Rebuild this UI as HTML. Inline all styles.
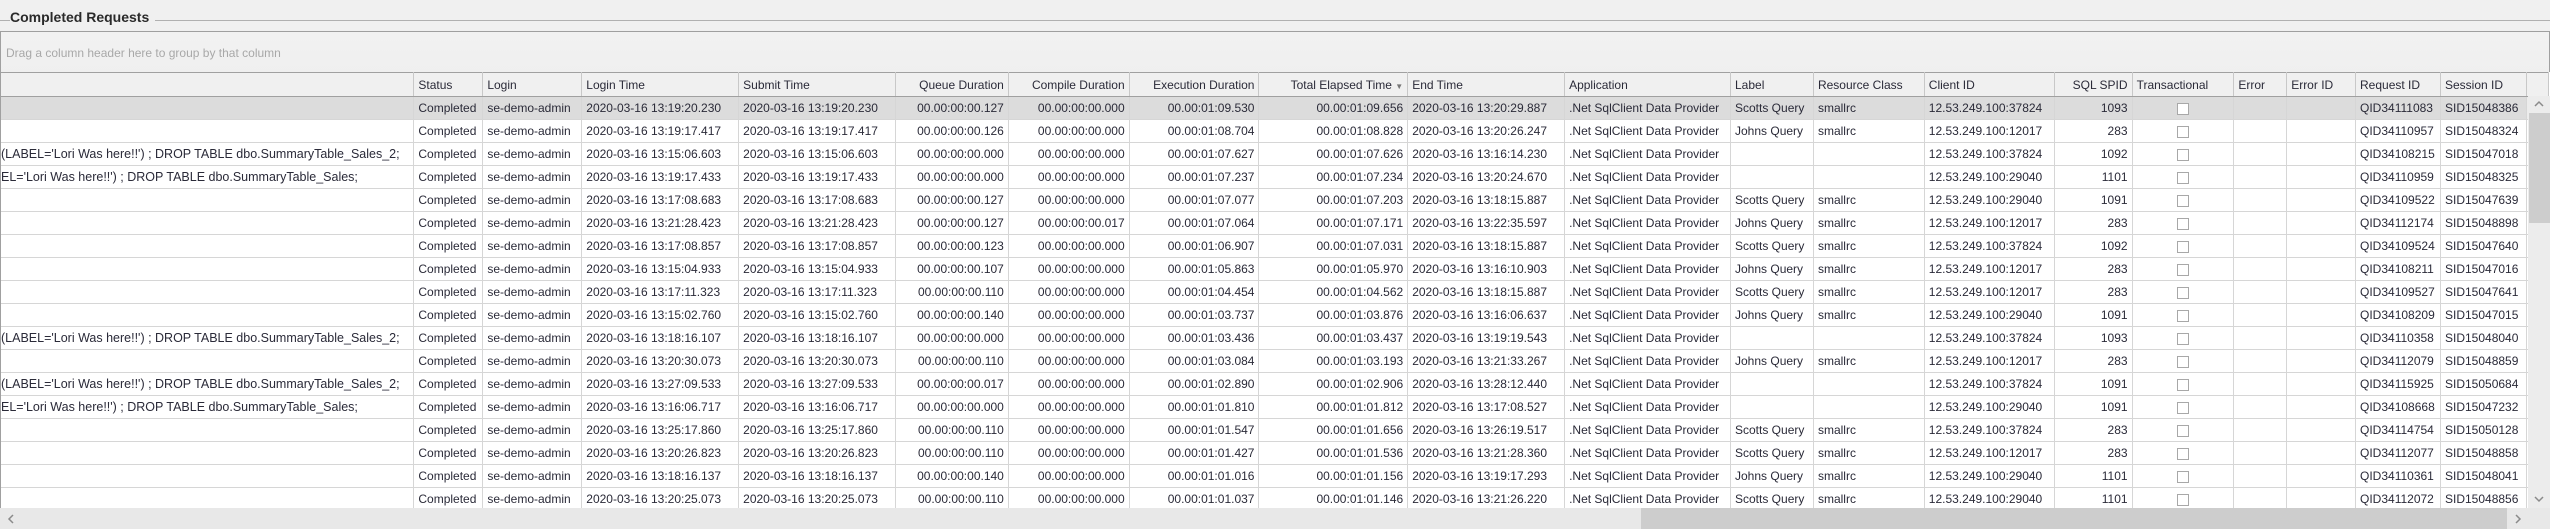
<!DOCTYPE html>
<html><head><meta charset="utf-8"><style>
*{box-sizing:border-box;margin:0;padding:0}
body{width:2550px;height:529px;overflow:hidden;background:#f0f0f0;font-family:"Liberation Sans",sans-serif;color:#2a2a38;position:relative}
.title{position:absolute;left:10px;top:9px;font-size:14px;font-weight:bold;color:#2a2a2a;background:#f0f0f0;padding:0 6px 0 0;z-index:2}
.tline{position:absolute;left:0;right:0;top:20px;border-top:1px solid #b0b0b0}
.grp{position:absolute;left:0;top:31px;width:2550px;height:42px;border:1px solid #a0a0a0;border-bottom:none;background:linear-gradient(#f2f2f2,#efefef)}
.grp span{position:absolute;left:5px;top:14px;font-size:12px;color:#a8a8a8}
.grid{position:absolute;left:0;top:72px;width:2550px;height:457px;border-left:1px solid #a0a0a0;background:#fff;overflow:hidden}
table{border-collapse:collapse;table-layout:fixed;position:absolute;left:-1px;top:0}
td,th{height:23px;white-space:nowrap;overflow:hidden;font-size:12px;padding:0 4px;border-right:1px solid #d6d6d6;border-bottom:1px solid #d6d6d6;text-align:left;font-weight:normal}
th{background:#f0f0f0;border-top:1px solid #a0a0a0;border-bottom:1px solid #a0a0a0;border-right:1px solid #c8c8c8;height:24px}
tr.sel td{background:#dcdcdc}
td.r,th.r{text-align:right}
td.c{text-align:center}
td.q{font-size:12.5px;padding:0 0 0 1px}
.cb{display:inline-block;width:12px;height:12px;border:1px solid #a8a8a8;background:#fff;vertical-align:middle}
.vs{position:absolute;left:2528px;top:96px;width:22px;height:412px;background:#ececec}
.vt{position:absolute;left:2529px;top:113px;width:21px;height:110px;background:#cdcdcd}
.hs{position:absolute;left:0;top:508px;width:2550px;height:21px;background:#e8e8e8}
.ht{position:absolute;left:1641px;top:508px;width:866px;height:21px;background:#cdcdcd}
svg.ar{position:absolute}
</style></head><body>
<div class="tline"></div>
<div class="title">Completed Requests</div>
<div class="grp"><span>Drag a column header here to group by that column</span></div>
<div class="grid">
<table>
<colgroup>
<col style="width:414px"><col style="width:69px"><col style="width:99px"><col style="width:157px"><col style="width:157px"><col style="width:113px"><col style="width:121px"><col style="width:130px"><col style="width:149px"><col style="width:157px"><col style="width:166px"><col style="width:83px"><col style="width:111px"><col style="width:130px"><col style="width:78px"><col style="width:102px"><col style="width:53px"><col style="width:69px"><col style="width:85px"><col style="width:86px"><col style="width:22px">
</colgroup>
<tr><th></th><th>Status</th><th>Login</th><th>Login Time</th><th>Submit Time</th><th class="r">Queue Duration</th><th class="r">Compile Duration</th><th class="r">Execution Duration</th><th class="r">Total Elapsed Time <span style="font-size:8px;color:#777">&#9660;</span></th><th>End Time</th><th>Application</th><th>Label</th><th>Resource Class</th><th>Client ID</th><th class="r">SQL SPID</th><th>Transactional</th><th>Error</th><th>Error ID</th><th>Request ID</th><th>Session ID</th><th></th></tr>
<tr class="sel"><td></td><td>Completed</td><td>se-demo-admin</td><td>2020-03-16 13:19:20.230</td><td>2020-03-16 13:19:20.230</td><td class="r">00.00:00:00.127</td><td class="r">00.00:00:00.000</td><td class="r">00.00:01:09.530</td><td class="r">00.00:01:09.656</td><td>2020-03-16 13:20:29.887</td><td>.Net SqlClient Data Provider</td><td>Scotts Query</td><td>smallrc</td><td>12.53.249.100:37824</td><td class="r">1093</td><td class="c"><span class="cb"></span></td><td></td><td></td><td>QID34111083</td><td>SID15048386</td><td style="background:#ececec"></td></tr>
<tr><td></td><td>Completed</td><td>se-demo-admin</td><td>2020-03-16 13:19:17.417</td><td>2020-03-16 13:19:17.417</td><td class="r">00.00:00:00.126</td><td class="r">00.00:00:00.000</td><td class="r">00.00:01:08.704</td><td class="r">00.00:01:08.828</td><td>2020-03-16 13:20:26.247</td><td>.Net SqlClient Data Provider</td><td>Johns Query</td><td>smallrc</td><td>12.53.249.100:12017</td><td class="r">283</td><td class="c"><span class="cb"></span></td><td></td><td></td><td>QID34110957</td><td>SID15048324</td><td></td></tr>
<tr><td class="q">(LABEL='Lori Was here!!') ; DROP TABLE dbo.SummaryTable_Sales_2;</td><td>Completed</td><td>se-demo-admin</td><td>2020-03-16 13:15:06.603</td><td>2020-03-16 13:15:06.603</td><td class="r">00.00:00:00.000</td><td class="r">00.00:00:00.000</td><td class="r">00.00:01:07.627</td><td class="r">00.00:01:07.626</td><td>2020-03-16 13:16:14.230</td><td>.Net SqlClient Data Provider</td><td></td><td></td><td>12.53.249.100:37824</td><td class="r">1092</td><td class="c"><span class="cb"></span></td><td></td><td></td><td>QID34108215</td><td>SID15047018</td><td></td></tr>
<tr><td class="q">EL='Lori Was here!!') ; DROP TABLE dbo.SummaryTable_Sales;</td><td>Completed</td><td>se-demo-admin</td><td>2020-03-16 13:19:17.433</td><td>2020-03-16 13:19:17.433</td><td class="r">00.00:00:00.000</td><td class="r">00.00:00:00.000</td><td class="r">00.00:01:07.237</td><td class="r">00.00:01:07.234</td><td>2020-03-16 13:20:24.670</td><td>.Net SqlClient Data Provider</td><td></td><td></td><td>12.53.249.100:29040</td><td class="r">1101</td><td class="c"><span class="cb"></span></td><td></td><td></td><td>QID34110959</td><td>SID15048325</td><td></td></tr>
<tr><td></td><td>Completed</td><td>se-demo-admin</td><td>2020-03-16 13:17:08.683</td><td>2020-03-16 13:17:08.683</td><td class="r">00.00:00:00.127</td><td class="r">00.00:00:00.000</td><td class="r">00.00:01:07.077</td><td class="r">00.00:01:07.203</td><td>2020-03-16 13:18:15.887</td><td>.Net SqlClient Data Provider</td><td>Scotts Query</td><td>smallrc</td><td>12.53.249.100:29040</td><td class="r">1091</td><td class="c"><span class="cb"></span></td><td></td><td></td><td>QID34109522</td><td>SID15047639</td><td></td></tr>
<tr><td></td><td>Completed</td><td>se-demo-admin</td><td>2020-03-16 13:21:28.423</td><td>2020-03-16 13:21:28.423</td><td class="r">00.00:00:00.127</td><td class="r">00.00:00:00.017</td><td class="r">00.00:01:07.064</td><td class="r">00.00:01:07.171</td><td>2020-03-16 13:22:35.597</td><td>.Net SqlClient Data Provider</td><td>Johns Query</td><td>smallrc</td><td>12.53.249.100:12017</td><td class="r">283</td><td class="c"><span class="cb"></span></td><td></td><td></td><td>QID34112174</td><td>SID15048898</td><td></td></tr>
<tr><td></td><td>Completed</td><td>se-demo-admin</td><td>2020-03-16 13:17:08.857</td><td>2020-03-16 13:17:08.857</td><td class="r">00.00:00:00.123</td><td class="r">00.00:00:00.000</td><td class="r">00.00:01:06.907</td><td class="r">00.00:01:07.031</td><td>2020-03-16 13:18:15.887</td><td>.Net SqlClient Data Provider</td><td>Scotts Query</td><td>smallrc</td><td>12.53.249.100:37824</td><td class="r">1092</td><td class="c"><span class="cb"></span></td><td></td><td></td><td>QID34109524</td><td>SID15047640</td><td></td></tr>
<tr><td></td><td>Completed</td><td>se-demo-admin</td><td>2020-03-16 13:15:04.933</td><td>2020-03-16 13:15:04.933</td><td class="r">00.00:00:00.107</td><td class="r">00.00:00:00.000</td><td class="r">00.00:01:05.863</td><td class="r">00.00:01:05.970</td><td>2020-03-16 13:16:10.903</td><td>.Net SqlClient Data Provider</td><td>Johns Query</td><td>smallrc</td><td>12.53.249.100:12017</td><td class="r">283</td><td class="c"><span class="cb"></span></td><td></td><td></td><td>QID34108211</td><td>SID15047016</td><td></td></tr>
<tr><td></td><td>Completed</td><td>se-demo-admin</td><td>2020-03-16 13:17:11.323</td><td>2020-03-16 13:17:11.323</td><td class="r">00.00:00:00.110</td><td class="r">00.00:00:00.000</td><td class="r">00.00:01:04.454</td><td class="r">00.00:01:04.562</td><td>2020-03-16 13:18:15.887</td><td>.Net SqlClient Data Provider</td><td>Scotts Query</td><td>smallrc</td><td>12.53.249.100:12017</td><td class="r">283</td><td class="c"><span class="cb"></span></td><td></td><td></td><td>QID34109527</td><td>SID15047641</td><td></td></tr>
<tr><td></td><td>Completed</td><td>se-demo-admin</td><td>2020-03-16 13:15:02.760</td><td>2020-03-16 13:15:02.760</td><td class="r">00.00:00:00.140</td><td class="r">00.00:00:00.000</td><td class="r">00.00:01:03.737</td><td class="r">00.00:01:03.876</td><td>2020-03-16 13:16:06.637</td><td>.Net SqlClient Data Provider</td><td>Johns Query</td><td>smallrc</td><td>12.53.249.100:29040</td><td class="r">1091</td><td class="c"><span class="cb"></span></td><td></td><td></td><td>QID34108209</td><td>SID15047015</td><td></td></tr>
<tr><td class="q">(LABEL='Lori Was here!!') ; DROP TABLE dbo.SummaryTable_Sales_2;</td><td>Completed</td><td>se-demo-admin</td><td>2020-03-16 13:18:16.107</td><td>2020-03-16 13:18:16.107</td><td class="r">00.00:00:00.000</td><td class="r">00.00:00:00.000</td><td class="r">00.00:01:03.436</td><td class="r">00.00:01:03.437</td><td>2020-03-16 13:19:19.543</td><td>.Net SqlClient Data Provider</td><td></td><td></td><td>12.53.249.100:37824</td><td class="r">1093</td><td class="c"><span class="cb"></span></td><td></td><td></td><td>QID34110358</td><td>SID15048040</td><td></td></tr>
<tr><td></td><td>Completed</td><td>se-demo-admin</td><td>2020-03-16 13:20:30.073</td><td>2020-03-16 13:20:30.073</td><td class="r">00.00:00:00.110</td><td class="r">00.00:00:00.000</td><td class="r">00.00:01:03.084</td><td class="r">00.00:01:03.193</td><td>2020-03-16 13:21:33.267</td><td>.Net SqlClient Data Provider</td><td>Johns Query</td><td>smallrc</td><td>12.53.249.100:12017</td><td class="r">283</td><td class="c"><span class="cb"></span></td><td></td><td></td><td>QID34112079</td><td>SID15048859</td><td></td></tr>
<tr><td class="q">(LABEL='Lori Was here!!') ; DROP TABLE dbo.SummaryTable_Sales_2;</td><td>Completed</td><td>se-demo-admin</td><td>2020-03-16 13:27:09.533</td><td>2020-03-16 13:27:09.533</td><td class="r">00.00:00:00.017</td><td class="r">00.00:00:00.000</td><td class="r">00.00:01:02.890</td><td class="r">00.00:01:02.906</td><td>2020-03-16 13:28:12.440</td><td>.Net SqlClient Data Provider</td><td></td><td></td><td>12.53.249.100:37824</td><td class="r">1091</td><td class="c"><span class="cb"></span></td><td></td><td></td><td>QID34115925</td><td>SID15050684</td><td></td></tr>
<tr><td class="q">EL='Lori Was here!!') ; DROP TABLE dbo.SummaryTable_Sales;</td><td>Completed</td><td>se-demo-admin</td><td>2020-03-16 13:16:06.717</td><td>2020-03-16 13:16:06.717</td><td class="r">00.00:00:00.000</td><td class="r">00.00:00:00.000</td><td class="r">00.00:01:01.810</td><td class="r">00.00:01:01.812</td><td>2020-03-16 13:17:08.527</td><td>.Net SqlClient Data Provider</td><td></td><td></td><td>12.53.249.100:29040</td><td class="r">1091</td><td class="c"><span class="cb"></span></td><td></td><td></td><td>QID34108668</td><td>SID15047232</td><td></td></tr>
<tr><td></td><td>Completed</td><td>se-demo-admin</td><td>2020-03-16 13:25:17.860</td><td>2020-03-16 13:25:17.860</td><td class="r">00.00:00:00.110</td><td class="r">00.00:00:00.000</td><td class="r">00.00:01:01.547</td><td class="r">00.00:01:01.656</td><td>2020-03-16 13:26:19.517</td><td>.Net SqlClient Data Provider</td><td>Scotts Query</td><td>smallrc</td><td>12.53.249.100:37824</td><td class="r">283</td><td class="c"><span class="cb"></span></td><td></td><td></td><td>QID34114754</td><td>SID15050128</td><td></td></tr>
<tr><td></td><td>Completed</td><td>se-demo-admin</td><td>2020-03-16 13:20:26.823</td><td>2020-03-16 13:20:26.823</td><td class="r">00.00:00:00.110</td><td class="r">00.00:00:00.000</td><td class="r">00.00:01:01.427</td><td class="r">00.00:01:01.536</td><td>2020-03-16 13:21:28.360</td><td>.Net SqlClient Data Provider</td><td>Scotts Query</td><td>smallrc</td><td>12.53.249.100:12017</td><td class="r">283</td><td class="c"><span class="cb"></span></td><td></td><td></td><td>QID34112077</td><td>SID15048858</td><td></td></tr>
<tr><td></td><td>Completed</td><td>se-demo-admin</td><td>2020-03-16 13:18:16.137</td><td>2020-03-16 13:18:16.137</td><td class="r">00.00:00:00.140</td><td class="r">00.00:00:00.000</td><td class="r">00.00:01:01.016</td><td class="r">00.00:01:01.156</td><td>2020-03-16 13:19:17.293</td><td>.Net SqlClient Data Provider</td><td>Johns Query</td><td>smallrc</td><td>12.53.249.100:29040</td><td class="r">1101</td><td class="c"><span class="cb"></span></td><td></td><td></td><td>QID34110361</td><td>SID15048041</td><td></td></tr>
<tr><td></td><td>Completed</td><td>se-demo-admin</td><td>2020-03-16 13:20:25.073</td><td>2020-03-16 13:20:25.073</td><td class="r">00.00:00:00.110</td><td class="r">00.00:00:00.000</td><td class="r">00.00:01:01.037</td><td class="r">00.00:01:01.146</td><td>2020-03-16 13:21:26.220</td><td>.Net SqlClient Data Provider</td><td>Scotts Query</td><td>smallrc</td><td>12.53.249.100:29040</td><td class="r">1101</td><td class="c"><span class="cb"></span></td><td></td><td></td><td>QID34112072</td><td>SID15048856</td><td></td></tr>
</table>
</div>
<div class="vs"></div><div class="vt"></div>
<svg class="ar" style="left:2533px;top:100px" width="12" height="8"><path d="M2 6 L6 2 L10 6" fill="none" stroke="#8a8a8a" stroke-width="1.5"/></svg>
<svg class="ar" style="left:2533px;top:495px" width="12" height="8"><path d="M2 2 L6 6 L10 2" fill="none" stroke="#8a8a8a" stroke-width="1.5"/></svg>
<div class="hs"></div><div class="ht"></div>
<svg class="ar" style="left:7px;top:513px" width="8" height="12"><path d="M6 2 L2 6 L6 10" fill="none" stroke="#8a8a8a" stroke-width="1.5"/></svg>
<svg class="ar" style="left:2514px;top:513px" width="8" height="12"><path d="M2 2 L6 6 L2 10" fill="none" stroke="#8a8a8a" stroke-width="1.5"/></svg>
</body></html>
